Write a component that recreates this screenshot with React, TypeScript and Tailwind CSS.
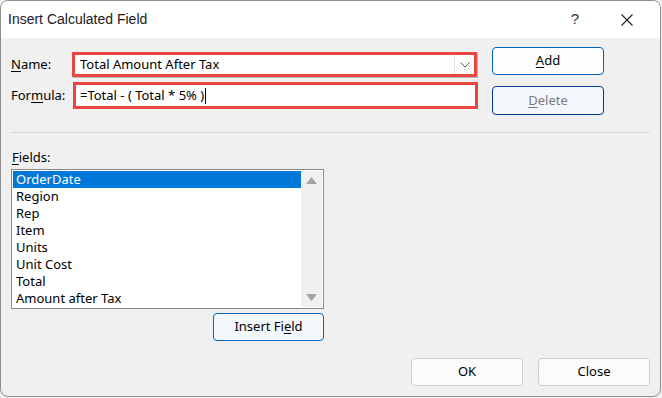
import React from 'react';

const fields = ['OrderDate', 'Region', 'Rep', 'Item', 'Units', 'Unit Cost', 'Total', 'Amount after Tax'];

const body = { fontFamily: '"Noto Sans", "Open Sans", sans-serif' };
const title = { fontFamily: '"Liberation Sans Narrow", "Liberation Sans", sans-serif' };

export default function App() {
  return (
    <div className="w-[662px] h-[398px] bg-[#f0f0f0]" style={body}>
      <div className="w-[661px] h-[397px] flex flex-col rounded-[8px] border border-[#8f8f8f] overflow-hidden bg-[#f0f0f0] text-[13px] text-black">
        {/* title bar */}
        <div className="h-[37px] shrink-0 bg-white flex items-center justify-between pl-[7px]">
          <span className="text-[14px] text-[#1a1a1a]" style={title}>
            Insert Calculated Field
          </span>
          <div className="flex items-center h-full">
            <span className="w-[46px] text-center text-[15px] text-[#333]" style={title}>?</span>
            <span className="w-[46px] flex justify-center ml-[6px] mr-[10px]">
              <svg width="12" height="12" viewBox="0 0 12 12">
                <path d="M0.5 0.5L11.5 11.5M11.5 0.5L0.5 11.5" stroke="#222" strokeWidth="1.1" fill="none" />
              </svg>
            </span>
          </div>
        </div>

        <div className="flex-1 flex flex-col px-[9px]">
          {/* name / formula + buttons */}
          <div className="flex mt-[9px]">
            <div className="flex flex-col pt-[5px] gap-[5px]">
              <div className="flex items-center">
                <span className="w-[62px] pl-[1px]">
                  <span className="underline underline-offset-2">N</span>ame:
                </span>
                <div className="w-[405px] h-[25px] border-[3px] border-[#e8463f] bg-white flex items-center shadow-[1px_1px_0_#b8b8b8]">
                  <span className="flex-1 pl-[5px] leading-none">Total Amount After Tax</span>
                  <span className="w-[20px] h-full border-l border-[#e6e6e6] flex items-center justify-center">
                    <svg width="10" height="6" viewBox="0 0 10 6">
                      <path d="M0.5 0.5L5 5L9.5 0.5" stroke="#555" strokeWidth="1" fill="none" />
                    </svg>
                  </span>
                </div>
              </div>
              <div className="flex items-center">
                <span className="w-[63px] pl-[1px]">
                  For<span className="underline underline-offset-2">m</span>ula:
                </span>
                <div className="w-[405px] h-[27px] border-[3px] border-[#e8463f] bg-white flex items-center">
                  <span className="pl-[4px] leading-none">=Total - ( Total * 5% )</span>
                  <span className="w-px h-[16px] bg-black ml-[1px]" />
                </div>
              </div>
            </div>
            <div className="flex flex-col ml-[14px] gap-[11px]">
              <button className="w-[112px] h-[28px] rounded-[4px] border border-[#0067c0] bg-[#fdfdfd]">
                <span className="underline underline-offset-2">A</span>dd
              </button>
              <button className="w-[112px] h-[29px] rounded-[4px] border border-[#003e92] bg-[#f4f8fc] text-[#7a7a7a]">
                <span className="underline underline-offset-2">D</span>elete
              </button>
            </div>
          </div>

          <div className="h-px bg-[#d9d9d9] mt-[17px] mr-[1px] ml-[1px]" />

          {/* fields */}
          <div className="mt-[16px] pl-[2px] leading-[16px]">
            <span className="underline underline-offset-2">F</span>ields:
          </div>
          <div className="flex items-start mt-[4px] ml-[1px]">
            <div className="flex flex-col items-end">
              <div className="w-[313px] h-[140px] border border-[#8a8a8a] bg-white flex p-px">
                <ul className="flex-1">
                  {fields.map((f, i) => (
                    <li
                      key={f}
                      className={`h-[17px] leading-[17px] pl-[3px] ${i === 0 ? 'bg-[#0078d7] text-white' : ''}`}
                    >
                      {f}
                    </li>
                  ))}
                </ul>
                <div className="w-[21px] bg-[#f0f0f0] flex flex-col items-center justify-between py-[6px]">
                  <svg width="11" height="7" viewBox="0 0 11 7">
                    <path d="M5.5 0L11 7H0Z" fill="#a3a3a3" />
                  </svg>
                  <svg width="11" height="7" viewBox="0 0 11 7">
                    <path d="M0 0H11L5.5 7Z" fill="#a3a3a3" />
                  </svg>
                </div>
              </div>
              <button className="mt-[4px] w-[111px] h-[28px] rounded-[4px] border border-[#0067c0] bg-[#f3f8fd]">
                Insert Fi<span className="underline underline-offset-2">e</span>ld
              </button>
            </div>
          </div>

          <div className="flex justify-end gap-[15px] mt-[17px] mr-[1px]">
            <button className="w-[112px] h-[28px] rounded-[4px] border border-[#d0d0d0] bg-[#fbfbfb]">OK</button>
            <button className="w-[112px] h-[28px] rounded-[4px] border border-[#d0d0d0] bg-[#fbfbfb]">Close</button>
          </div>
        </div>
      </div>
    </div>
  );
}
